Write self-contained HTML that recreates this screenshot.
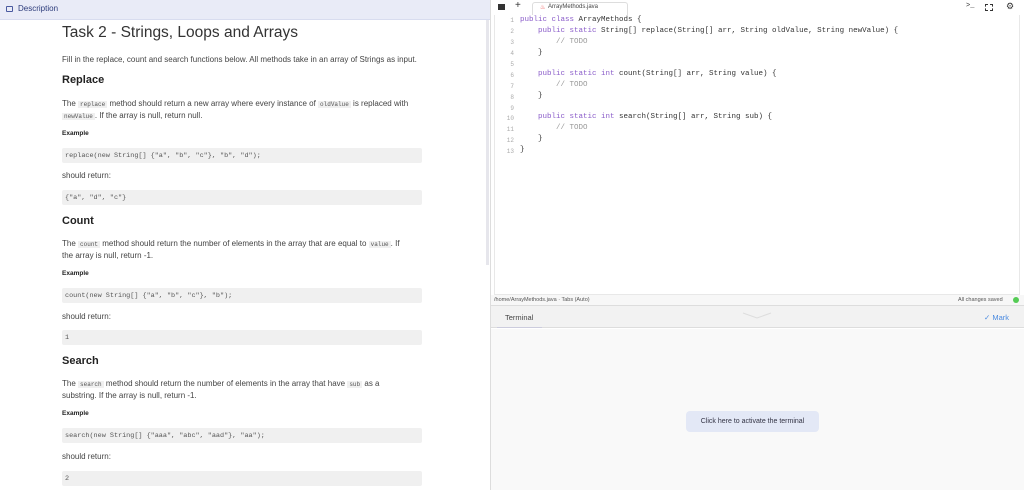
<!DOCTYPE html>
<html><head><style>
*{margin:0;padding:0;box-sizing:border-box}
body{width:1024px;height:490px;overflow:hidden;background:#fff;font-family:"Liberation Sans",sans-serif;position:relative;color:#333}
.abs{position:absolute}
#left{left:0;top:0;width:490px;height:490px}
#hdr{left:0;top:0;width:490px;height:20px;background:#e9ebf7;border-bottom:1px solid #d8dcef}
#hdr span{position:absolute;left:18px;top:4px;font-size:8px;color:#2b3a7a}
.t{position:absolute;left:62px;font-size:8px;color:#444;white-space:nowrap}
.h{position:absolute;left:62px;font-size:11px;font-weight:bold;color:#222}
.ex{position:absolute;left:62px;font-size:6.5px;font-weight:bold;color:#222}
.cb{position:absolute;left:62px;width:360px;height:15px;background:#f0f0f0;border-radius:2px;font-family:"Liberation Mono",monospace;font-size:6.8px;color:#555;padding:4px 3px}
code{font-family:"Liberation Mono",monospace;font-size:6px;background:#f0f0f0;padding:0 2px;color:#555}
.ln{position:absolute;left:500px;width:14px;text-align:right;font-family:"Liberation Mono",monospace;font-size:6px;color:#aaa}
.cl{position:absolute;left:520px;font-family:"Liberation Mono",monospace;font-size:7.5px;color:#333;white-space:pre}
.k{color:#8a5cc9}.c{color:#999}
</style></head><body>
<div id="left" class="abs">
<div id="hdr" class="abs"><div class="abs" style="left:6px;top:6px;width:7px;height:6px;border:1px solid #4a5aa0;border-radius:1px"></div><span>Description</span></div>
<div class="abs" style="left:486px;top:20px;width:3px;height:245px;background:#e6e6ec"></div>
<div class="abs" style="left:62px;top:24px;font-size:15.5px;color:#333">Task 2 - Strings, Loops and Arrays</div>
<div class="t" style="top:55px">Fill in the replace, count and search functions below. All methods take in an array of Strings as input.</div>
<div class="h" style="top:74px">Replace</div>
<div class="t" style="top:99px">The <code>replace</code> method should return a new array where every instance of <code>oldValue</code> is replaced with</div>
<div class="t" style="top:111px"><code>newValue</code>. If the array is null, return null.</div>
<div class="ex" style="top:130px">Example</div>
<div class="cb" style="top:148px">replace(new String[] {"a", "b", "c"}, "b", "d");</div>
<div class="t" style="top:171px">should return:</div>
<div class="cb" style="top:190px">{"a", "d", "c"}</div>
<div class="h" style="top:215px">Count</div>
<div class="t" style="top:239px">The <code>count</code> method should return the number of elements in the array that are equal to <code>value</code>. If</div>
<div class="t" style="top:251px">the array is null, return -1.</div>
<div class="ex" style="top:270px">Example</div>
<div class="cb" style="top:288px">count(new String[] {"a", "b", "c"}, "b");</div>
<div class="t" style="top:312px">should return:</div>
<div class="cb" style="top:330px">1</div>
<div class="h" style="top:355px">Search</div>
<div class="t" style="top:379px">The <code>search</code> method should return the number of elements in the array that have <code>sub</code> as a</div>
<div class="t" style="top:391px">substring. If the array is null, return -1.</div>
<div class="ex" style="top:410px">Example</div>
<div class="cb" style="top:428px">search(new String[] {"aaa", "abc", "aad"}, "aa");</div>
<div class="t" style="top:452px">should return:</div>
<div class="cb" style="top:471px">2</div>
</div>
<div class="abs" style="left:490px;top:0;width:1px;height:490px;background:#ddd"></div>
<div class="abs" style="left:491px;top:0;width:533px;height:15px;background:#fff"></div>
<div class="abs" style="left:498px;top:4px;width:7px;height:6px;background:#333"></div>
<div class="abs" style="left:515px;top:0px;font-size:10px;color:#333">+</div>
<div class="abs" style="left:532px;top:2px;width:96px;height:13px;border:1px solid #ddd;border-bottom:none;border-radius:3px 3px 0 0"></div>
<div class="abs" style="left:540px;top:4px;font-size:6px;color:#e44">&#9832;</div>
<div class="abs" style="left:548px;top:4px;font-size:6px;color:#444">ArrayMethods.java</div>
<div class="abs" style="left:966px;top:2px;font-size:7px;color:#333;font-family:'Liberation Mono',monospace">&gt;_</div>
<div class="abs" style="left:985px;top:4px;width:8px;height:7px;border:1px dashed #333"></div>
<div class="abs" style="left:1006px;top:1px;font-size:9px;color:#333">&#9881;</div>
<div class="abs" style="left:494px;top:15px;width:526px;height:280px;border:1px solid #e8e8e8;border-top:none"></div>
<div class="ln" style="top:17px">1</div><div class="cl" style="top:16px"><span class="k">public class</span> ArrayMethods {</div>
<div class="ln" style="top:28px">2</div><div class="cl" style="top:27px">    <span class="k">public static</span> String[] replace(String[] arr, String oldValue, String newValue) {</div>
<div class="ln" style="top:39px">3</div><div class="cl c" style="top:38px">        // TODO</div>
<div class="ln" style="top:50px">4</div><div class="cl" style="top:49px">    }</div>
<div class="ln" style="top:61px">5</div>
<div class="ln" style="top:72px">6</div><div class="cl" style="top:70px">    <span class="k">public static int</span> count(String[] arr, String value) {</div>
<div class="ln" style="top:83px">7</div><div class="cl c" style="top:81px">        // TODO</div>
<div class="ln" style="top:94px">8</div><div class="cl" style="top:92px">    }</div>
<div class="ln" style="top:105px">9</div>
<div class="ln" style="top:115px">10</div><div class="cl" style="top:113px">    <span class="k">public static int</span> search(String[] arr, String sub) {</div>
<div class="ln" style="top:126px">11</div><div class="cl c" style="top:124px">        // TODO</div>
<div class="ln" style="top:137px">12</div><div class="cl" style="top:135px">    }</div>
<div class="ln" style="top:148px">13</div><div class="cl" style="top:146px">}</div>
<div class="abs" style="left:491px;top:295px;width:533px;height:11px;background:#f7f7f7;border-bottom:1px solid #ddd"></div>
<div class="abs" style="left:494px;top:297px;font-size:5.5px;color:#555">/home/ArrayMethods.java · Tabs (Auto)</div>
<div class="abs" style="left:958px;top:297px;font-size:5.5px;color:#555">All changes saved</div>
<div class="abs" style="left:1013px;top:297px;width:6px;height:6px;border-radius:50%;background:#5c5"></div>
<div class="abs" style="left:491px;top:306px;width:533px;height:22px;background:#f2f2f2;border-bottom:1px solid #ddd"></div>
<div class="abs" style="left:505px;top:313px;font-size:7.5px;color:#444">Terminal</div>
<div class="abs" style="left:497px;top:327px;width:45px;height:1px;background:#ccd"></div>
<svg class="abs" style="left:742px;top:312px" width="30" height="8"><path d="M1 1 L15 6 L29 1" stroke="#ddd" fill="none"/></svg>
<div class="abs" style="left:984px;top:313px;font-size:7.5px;color:#4a8ae0">&#10003; Mark</div>
<div class="abs" style="left:491px;top:329px;width:533px;height:161px;background:#f9f9f9"></div>
<div class="abs" style="left:686px;top:411px;width:133px;height:21px;background:#e3e8f6;border-radius:4px;font-size:7px;color:#334;text-align:center;line-height:21px">Click here to activate the terminal</div>
</body></html>
